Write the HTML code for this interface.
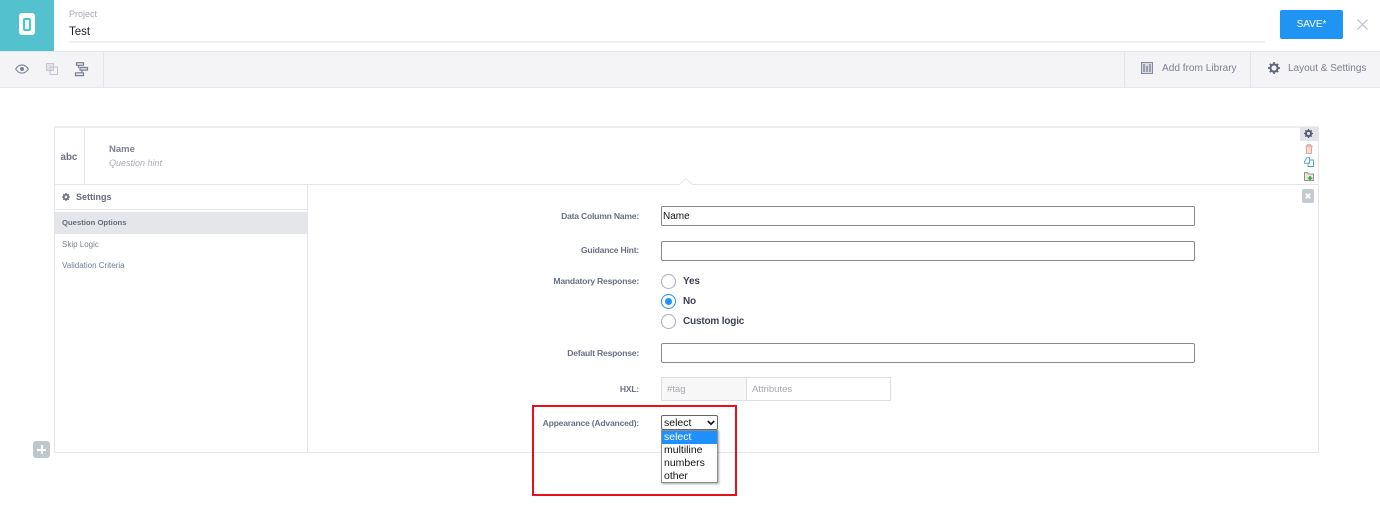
<!DOCTYPE html>
<html>
<head>
<meta charset="utf-8">
<style>
html,body{margin:0;padding:0;background:#fff;}
body{width:1380px;height:514px;overflow:hidden;position:relative;font-family:"Liberation Sans",sans-serif;}
.a{position:absolute;box-sizing:border-box;}
.t{position:absolute;white-space:nowrap;line-height:1;}
.lbl{position:absolute;right:741px;white-space:nowrap;line-height:1;font-size:8.6px;font-weight:bold;color:#6b7185;letter-spacing:-.22px;}
.inp{position:absolute;left:661px;width:534px;height:20px;border:1px solid #8a8a8a;border-radius:2px;box-sizing:border-box;background:#fff;}
.rad{position:absolute;left:661px;width:15px;height:15px;border:1px solid #a9adbb;border-radius:50%;box-sizing:border-box;background:#fff;}
.rl{position:absolute;left:683px;font-size:10px;font-weight:bold;color:#3d4152;line-height:1;white-space:nowrap;letter-spacing:-.18px;}
svg{position:absolute;overflow:visible;}
.opt{height:13px;line-height:13px;padding-left:2px;font-size:10.5px;color:#111;}
</style>
</head>
<body>
<!-- top bar -->
<div class="a" style="left:0;top:0;width:54px;height:51px;background:#53c1ce;"></div>
<div class="a" style="left:19px;top:13px;width:16px;height:22px;background:#fff;border-radius:3px;"></div>
<div class="a" style="left:23px;top:18px;width:8px;height:13px;border:2px solid #53c1ce;border-radius:2px;background:#e6f6f8;"></div>
<div class="t" style="left:69px;top:9.500px;font-size:9px;color:#a4a8b5;">Project</div>
<div class="t" style="left:69px;top:27px;font-size:11.500px;color:#20222c;">Test</div>
<div class="a" style="left:69px;top:41px;width:1196px;height:2px;background:#f0f1f3;"></div>
<div class="a" style="left:1280px;top:10px;width:63px;height:29px;background:#2094f3;border-radius:2px;"></div>
<div class="t" style="left:1280px;top:20px;width:63px;text-align:center;font-size:10px;color:#fff;">SAVE*</div>
<svg style="left:1357px;top:19px" width="11" height="11" viewBox="0 0 11 11"><path d="M.5.5l10 10M10.500.5l-10 10" stroke="#b9c0cc" stroke-width="1.200" fill="none"/></svg>
<!-- toolbar -->
<div class="a" style="left:0;top:51px;width:1380px;height:37px;background:#f4f4f7;border-top:1px solid #e6e7ea;border-bottom:1px solid #e6e7ea;"></div>
<div class="a" style="left:103px;top:52px;width:1px;height:35px;background:#e3e4e8;"></div>
<div class="a" style="left:1124px;top:52px;width:1px;height:35px;background:#e3e4e8;"></div>
<div class="a" style="left:1250px;top:52px;width:1px;height:35px;background:#e3e4e8;"></div>
<svg style="left:15px;top:64px" width="14" height="10" viewBox="0 0 14 10"><path d="M.7 5C2.500 2 4.500.9 7 .9S11.500 2 13.300 5C11.500 8 9.500 9.100 7 9.100S2.500 8 .7 5z" fill="none" stroke="#7b8094" stroke-width="1.100"/><circle cx="7" cy="5" r="2" fill="#7b8094"/></svg>
<svg style="left:46px;top:63px" width="12" height="12" viewBox="0 0 12 12"><path d="M.5.5h7v7h-7z" fill="#e3e4ea" stroke="#c3c5cf" stroke-width="1"/><path d="M4 4h7.500v7.500H4z" fill="none" stroke="#c3c5cf" stroke-width="1"/></svg>
<svg style="left:75px;top:62px" width="14" height="15" viewBox="0 0 14 15"><path d="M1.500.7h7v2.600h-7zM3.500 3.300v2.700M5 5.500h7.500v2.600H5zM7 8.100v2.400M.5 10.800h8v2.800h-8z" fill="#e3e4ea" stroke="#7b8094" stroke-width="1.200"/></svg>
<svg style="left:1141px;top:62px" width="12" height="12" viewBox="0 0 12 12"><path d="M.5.5h11v11H.5z" fill="#d9dae1" stroke="#85899a" stroke-width="1"/><path d="M3 2v8M6 4v6M9 2v8" stroke="#85899a" stroke-width="1.500"/></svg>
<div class="t" style="left:1162px;top:64px;font-size:10.100px;color:#7b7f90;">Add from Library</div>
<svg style="left:1268px;top:62px" width="12" height="12" viewBox="0 0 12 12"><circle cx="6" cy="6" r="3.600" fill="none" stroke="#5f6477" stroke-width="2"/><path d="M6 0v2.500M6 9.500V12M0 6h2.500M9.500 6H12M1.800 1.800l1.800 1.800M8.400 8.400l1.800 1.800M10.200 1.800L8.400 3.600M3.600 8.400l-1.800 1.800" stroke="#5f6477" stroke-width="1.700"/></svg>
<div class="t" style="left:1288px;top:64px;font-size:10px;color:#7b7f90;">Layout &amp; Settings</div>
<!-- card -->
<div class="a" style="left:54px;top:126px;width:1265px;height:327px;border:1px solid #e4e6eb;border-top:2px solid #eceef1;background:#fff;"></div>
<div class="a" style="left:84px;top:127px;width:1px;height:57px;background:#e4e6eb;"></div>
<div class="a" style="left:55px;top:184px;width:1263px;height:1px;background:#e4e6eb;"></div>
<svg style="left:679px;top:178px" width="16" height="8" viewBox="0 0 16 8"><path d="M0 7L7 .7 14 7" fill="#fff" stroke="#e4e6eb" stroke-width="1"/></svg>
<div class="t" style="left:60.500px;top:152.500px;font-size:9.800px;font-weight:bold;color:#6b7185;">abc</div>
<div class="t" style="left:109px;top:144.500px;font-size:9.500px;font-weight:bold;color:#7d8296;">Name</div>
<div class="t" style="left:109px;top:158.500px;font-size:9px;font-style:italic;color:#a9adb9;">Question hint</div>
<!-- side icons -->
<div class="a" style="left:1300px;top:127px;width:18px;height:14px;background:#e2e4e9;"></div>
<svg style="left:1304px;top:129px" width="9" height="9" viewBox="0 0 12 12"><circle cx="6" cy="6" r="3.400" fill="none" stroke="#555a6c" stroke-width="2.600"/><path d="M6 0v2.500M6 9.500V12M0 6h2.500M9.500 6H12M1.800 1.800l1.800 1.800M8.400 8.400l1.800 1.800M10.200 1.800L8.400 3.600M3.600 8.400l-1.800 1.800" stroke="#555a6c" stroke-width="1.800"/></svg>
<svg style="left:1305px;top:144px" width="8" height="10" viewBox="0 0 8 10"><path d="M.5 2h7M2.500 2V.7h3V2M1.200 2l.4 7.400h4.800L6.800 2z" fill="#f6dcd6" stroke="#e09a8c" stroke-width=".9"/></svg>
<svg style="left:1304px;top:157px" width="10" height="10" viewBox="0 0 10 10"><path d="M4 3h5.500v6.500H4z" fill="#fff" stroke="#4a9bea" stroke-width=".9"/><path d="M.5 4.500L3 .7h2.500v5.500h-5z" fill="#fff" stroke="#4a9bea" stroke-width=".9"/></svg>
<svg style="left:1304px;top:172px" width="10" height="9" viewBox="0 0 10 9"><path d="M.5 8.500V.7h3l1 1.300h5v6.500z" fill="#e9e6d8" stroke="#777" stroke-width=".8"/><path d="M6 4v4.500M3.800 6.300h4.400" stroke="#3aa845" stroke-width="1.600"/></svg>
<div class="a" style="left:1302px;top:189px;width:12px;height:14px;background:#c5c9d0;border-radius:2px;"></div>
<svg style="left:1305px;top:193px" width="6" height="6" viewBox="0 0 6 6"><path d="M.7.700l4.600 4.600M5.300.700L.7 5.300" stroke="#fff" stroke-width="1.800"/></svg>
<!-- sidebar -->
<div class="a" style="left:307px;top:185px;width:1px;height:267px;background:#e4e6eb;"></div>
<svg style="left:62px;top:192.500px" width="8" height="8" viewBox="0 0 12 12"><circle cx="6" cy="6" r="3.400" fill="none" stroke="#6b7185" stroke-width="2.600"/><path d="M6 0v2.500M6 9.500V12M0 6h2.500M9.500 6H12M1.800 1.800l1.800 1.800M8.400 8.400l1.800 1.800M10.200 1.800L8.400 3.600M3.600 8.400l-1.800 1.800" stroke="#6b7185" stroke-width="1.800"/></svg>
<div class="t" style="left:76px;top:192.500px;font-size:9px;font-weight:bold;color:#666b7d;">Settings</div>
<div class="a" style="left:55px;top:209px;width:252px;height:1px;background:#e4e6eb;"></div>
<div class="a" style="left:55px;top:212px;width:252px;height:22px;background:#e4e6e9;"></div>
<div class="t" style="left:62px;top:218.500px;font-size:7.700px;font-weight:bold;color:#666b7d;">Question Options</div>
<div class="t" style="left:62px;top:240.500px;font-size:8px;color:#7c8194;">Skip Logic</div>
<div class="t" style="left:62px;top:262px;font-size:8px;color:#6f8099;">Validation Criteria</div>
<!-- form -->
<div class="lbl" style="top:212px;">Data Column Name:</div>
<div class="inp" style="top:206px;"></div>
<div class="t" style="left:663px;top:212px;font-size:10px;color:#111;">Name</div>
<div class="lbl" style="top:246px;">Guidance Hint:</div>
<div class="inp" style="top:241px;"></div>
<div class="lbl" style="top:277px;">Mandatory Response:</div>
<div class="rad" style="top:274px;"></div>
<div class="rl" style="top:277px;">Yes</div>
<div class="rad" style="top:294px;border-color:#2094f3;"></div>
<div class="a" style="left:665px;top:298px;width:7px;height:7px;border-radius:50%;background:#2094f3;"></div>
<div class="rl" style="top:297px;">No</div>
<div class="rad" style="top:314px;"></div>
<div class="rl" style="top:317px;">Custom logic</div>
<div class="lbl" style="top:349px;">Default Response:</div>
<div class="inp" style="top:343px;"></div>
<div class="lbl" style="top:385px;">HXL:</div>
<div class="a" style="left:661px;top:377px;width:86px;height:24px;background:#f7f7f8;border:1px solid #dcdee3;"></div>
<div class="a" style="left:746px;top:377px;width:145px;height:24px;background:#fff;border:1px solid #dcdee3;"></div>
<div class="t" style="left:667px;top:384.500px;font-size:9.500px;color:#a5a8b2;">#tag</div>
<div class="t" style="left:752px;top:384.500px;font-size:9.500px;color:#a5a8b2;">Attributes</div>
<div class="lbl" style="top:419px;">Appearance (Advanced):</div>
<!-- select -->
<div class="a" style="left:661px;top:415px;width:57px;height:15px;border:1px solid #666;border-radius:2px;background:#fff;"></div>
<div class="t" style="left:664px;top:417.500px;font-size:10.500px;color:#111;">select</div>
<svg style="left:707px;top:420px" width="8" height="6" viewBox="0 0 8 6"><path d="M.8 1l3.200 3.200L7.200 1" fill="none" stroke="#111" stroke-width="1.600"/></svg>
<div class="a" style="left:661px;top:430px;width:57px;height:53px;border:1px solid #8f8f8f;background:#fff;box-shadow:1px 1px 2px rgba(0,0,0,.35);">
<div class="opt" style="background:#1e90ff;color:#fff;">select</div>
<div class="opt">multiline</div>
<div class="opt">numbers</div>
<div class="opt">other</div>
</div>
<!-- red box -->
<div class="a" style="left:532px;top:405px;width:205px;height:91px;border:2px solid #e8101c;"></div>
<!-- add -->
<div class="a" style="left:33px;top:441px;width:17px;height:17px;background:#c0c8cf;border-radius:3px;"></div>
<div class="a" style="left:37px;top:448.500px;width:9px;height:2px;background:#fff;"></div>
<div class="a" style="left:40.500px;top:445px;width:2px;height:9px;background:#fff;"></div>
</body>
</html>
